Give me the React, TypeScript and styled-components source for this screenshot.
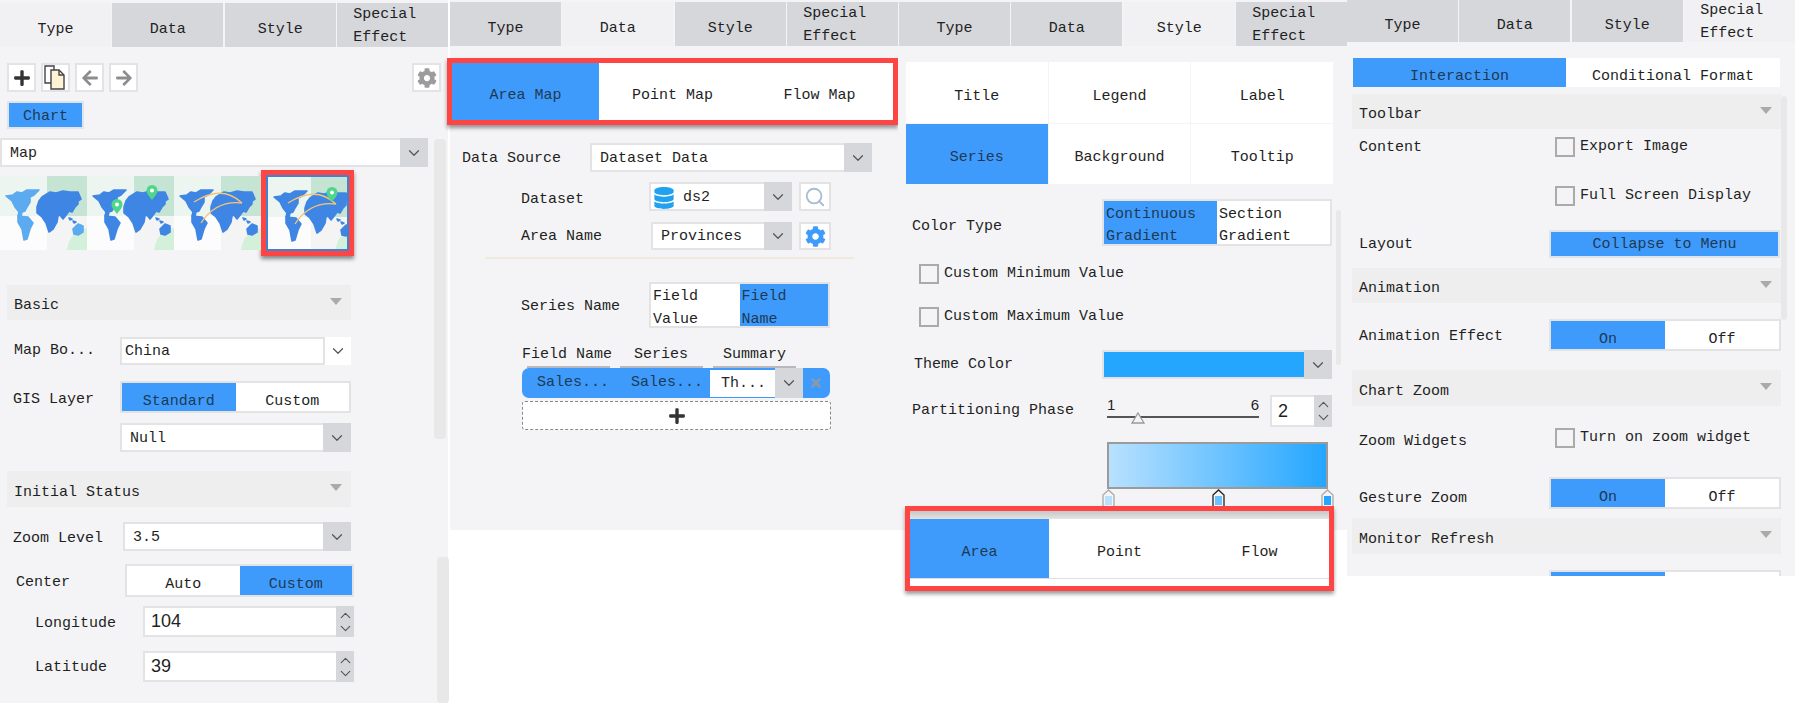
import React from 'react'
import styled, { createGlobalStyle } from 'styled-components'
import { ChevronDown, ChevronUp, Search } from 'lucide-react'
import { FaCog, FaDatabase, FaTimes, FaArrowLeft, FaArrowRight, FaPlus } from 'react-icons/fa'

const BLUE = '#3f9bfb'
const GREY = '#d6d7da'
const LINE = '#e3e3e6'

const Global = createGlobalStyle`
  html, body { margin: 0; padding: 0; background: #fff; overflow: hidden; }
  body { font: 15px/1.2 "Liberation Mono", "DejaVu Sans Mono", monospace; color: #1f1f24; }
  * { box-sizing: border-box; }
`

const Stage = styled.div`
  display: flex;
  width: 1795px;
  height: 703px;
  align-items: flex-start;
  overflow: hidden;
`
const Panel = styled.section<{ $w: number; $h: number; $left?: number; $clip?: boolean }>`
  position: relative;
  flex: none;
  width: ${p => p.$w}px;
  height: ${p => p.$h}px;
  margin-left: ${p => p.$left ?? 0}px;
  background: #f4f4f6;
  overflow: ${p => (p.$clip ? 'hidden' : 'visible')};
`
const TabBar = styled.div<{ $mt: number; $h: number; $pl?: number }>`
  display: flex;
  gap: 1.5px;
  margin-top: ${p => p.$mt}px;
  padding-left: ${p => p.$pl ?? 0}px;
  height: ${p => p.$h}px;
`
const Tab = styled.div<{ $on?: boolean; $wrap?: boolean }>`
  flex: 0 0 calc((100% - 4.5px) / 4);
  min-width: 0;
  display: flex;
  align-items: center;
  justify-content: ${p => (p.$wrap ? 'flex-start' : 'center')};
  padding: ${p => (p.$wrap ? '2px 30px 0 16px' : '8px 0 0')};
  line-height: 23px;
  background: ${p => (p.$on ? '#f1f1f3' : GREY)};
`
const Toolbar = styled.div`
  display: flex;
  gap: 5px;
  margin-top: 16px;
  padding: 0 7px;
`
const IconBtn = styled.div<{ $ml?: string; $w?: number; $h?: number }>`
  display: flex;
  align-items: center;
  justify-content: center;
  flex: none;
  width: ${p => p.$w ?? 29}px;
  height: ${p => p.$h ?? 29}px;
  margin-left: ${p => p.$ml ?? 0};
  background: #fff;
  border: 2px solid ${LINE};
`
const ChartBtn = styled.div`
  display: flex;
  align-items: center;
  justify-content: center;
  width: 77px;
  height: 28px;
  margin: 9px 0 0 7px;
  padding-top: 3px;
  background: ${BLUE};
  border: 2px solid #dfe3ea;
  color: #1d3a55;
`
const Row = styled.div<{ $mt: number; $h: number; $pl?: number }>`
  display: flex;
  align-items: center;
  margin-top: ${p => p.$mt}px;
  padding-left: ${p => p.$pl ?? 0}px;
  height: ${p => p.$h}px;
`
const Label = styled.div<{ $w: number; $dy?: number }>`
  flex: none;
  width: ${p => p.$w}px;
  white-space: pre;
  transform: translateY(${p => p.$dy ?? 0}px);
`
const SelectBox = styled.div<{ $w: number }>`
  flex: none;
  display: flex;
  align-items: stretch;
  width: ${p => p.$w}px;
  height: 100%;
  background: #fff;
  border: 2px solid ${LINE};
`
const SelectText = styled.div<{ $pl?: number }>`
  flex: 1;
  display: flex;
  align-items: center;
  gap: 8px;
  padding-left: ${p => p.$pl ?? 8}px;
  padding-top: 2px;
  min-width: 0;
`
const Arrow = styled.div<{ $plain?: boolean }>`
  flex: none;
  display: flex;
  align-items: center;
  justify-content: center;
  width: 28px;
  margin: -2px -2px -2px 0;
  color: #555;
  background: ${p => (p.$plain ? '#fff' : GREY)};
  border-left: ${p => (p.$plain ? `2px solid ${LINE}` : 'none')};
`
const ColorFill = styled.div`
  flex: 1;
  background: #24a6ff;
`
const Seg = styled.div<{ $w: number }>`
  flex: none;
  display: flex;
  width: ${p => p.$w}px;
  height: 100%;
  background: #fff;
  border: 2px solid ${LINE};
`
const SegItem = styled.div<{ $on?: boolean; $two?: boolean }>`
  flex: 0 0 50%;
  min-width: 0;
  display: flex;
  align-items: center;
  justify-content: ${p => (p.$two ? 'flex-start' : 'center')};
  padding: ${p => (p.$two ? '7px 20px 0 2px' : '10px 0 0')};
  line-height: 22.5px;
  color: ${p => (p.$on ? '#1d3a55' : 'inherit')};
  background: ${p => (p.$on ? BLUE : 'transparent')};
`
const Header = styled.div<{ $mt: number; $h: number; $ml?: number; $w?: number }>`
  display: flex;
  align-items: center;
  justify-content: space-between;
  width: ${p => p.$w ?? 344}px;
  height: ${p => p.$h}px;
  margin: ${p => p.$mt}px 0 0 ${p => p.$ml ?? 7}px;
  padding: 7px 9px 0 7px;
  background: #eeeeee;
  &::after {
    content: '';
    border: 6px solid transparent;
    border-top: 7px solid #aaa;
    border-bottom: 0;
    margin-top: -10px;
  }
`
const Thumbs = styled.div`
  display: flex;
  align-items: center;
  height: 86px;
  margin-top: 3px;
`
const Thumb = styled.div`
  position: relative;
  flex: none;
  width: 87px;
  height: 74px;
  display: grid;
  grid-template-columns: 47px 40px;
  grid-template-rows: 40px 34px;
  overflow: hidden;
`
const Selected = styled.div`
  flex: none;
  width: 93px;
  height: 86px;
  border: 5px solid #ff4444;
  box-shadow: 0 3px 4px rgba(0, 0, 0, 0.45);
  background: #3f82d0;
  padding: 2px;
  ${Thumb} { width: 79px; height: 72px; grid-template-columns: 43px 36px; }
`
const Tile = styled.div<{ $c: string }>`
  background: ${p => p.$c};
`
const Overlay = styled.svg`
  position: absolute;
  left: 0;
  top: 0;
`
const Spin = styled.div`
  flex: none;
  display: flex;
  flex-direction: column;
  align-items: center;
  justify-content: center;
  width: 18px;
  margin: -2px -2px -2px 0;
  background: ${GREY};
  color: #555;
  svg { margin: -2px 0; }
`
const NumText = styled.div`
  flex: 1;
  display: flex;
  align-items: center;
  padding-left: 6px;
  font: 18px "Liberation Sans", Arial, sans-serif;
`
const Scroll = styled.div<{ $top: number; $h: number; $right: number; $w: number }>`
  position: absolute;
  top: ${p => p.$top}px;
  right: ${p => p.$right}px;
  width: ${p => p.$w}px;
  height: ${p => p.$h}px;
  background: #e8e8e9;
  border-radius: 4px;
`
const RedStrip = styled.div`
  position: relative;
  display: flex;
  width: 451px;
  height: 67px;
  margin: 12px 0 0 -3px;
  border: 5px solid #ff4444;
  box-shadow: 0 3px 4px rgba(0, 0, 0, 0.4);
  background: #fff;
`
const StripItem = styled.div<{ $on?: boolean; $w?: number }>`
  flex: none;
  display: flex;
  align-items: center;
  justify-content: center;
  width: ${p => p.$w ?? 147}px;
  height: 100%;
  padding-top: 9px;
  color: ${p => (p.$on ? '#1d3a55' : 'inherit')};
  background: ${p => (p.$on ? BLUE : 'transparent')};
`
const Divider = styled.div`
  width: 369px;
  height: 2px;
  margin: 7px 0 0 35px;
  background: #eeeade;
`
const HeadRow = styled.div`
  display: flex;
  height: 23px;
  margin: 16px 0 0 72px;
`
const HeadCell = styled.div<{ $w: number; $ul: number }>`
  position: relative;
  width: ${p => p.$w}px;
  padding-top: 2px;
  &::after {
    content: '';
    position: absolute;
    left: ${p => p.$ul}px;
    bottom: -1px;
    width: 83px;
    height: 2px;
    background: #b9b9bd;
  }
`
const SeriesRow = styled.div`
  display: flex;
  align-items: center;
  width: 308px;
  height: 30px;
  margin: 1px 0 0 72px;
  background: ${BLUE};
  border-radius: 7px;
  overflow: hidden;
  color: #1d3a55;
`
const SeriesCell = styled.div<{ $w: number; $pl: number }>`
  flex: none;
  width: ${p => p.$w}px;
  padding-left: ${p => p.$pl}px;
`
const MiniSelect = styled.div`
  flex: none;
  display: flex;
  width: 91px;
  height: 27px;
  background: #fff;
  color: #26262b;
`
const CloseCell = styled.div`
  flex: 1;
  display: flex;
  align-items: center;
  justify-content: center;
  color: #8f99a6;
`
const AddRow = styled.div`
  display: flex;
  align-items: center;
  justify-content: center;
  width: 309px;
  height: 29px;
  margin: 3px 0 0 72px;
  background: #fff;
  border: 1px dashed #888;
  border-radius: 3px;
  color: #333;
`
const StyleGrid = styled.div`
  display: grid;
  grid-template-columns: repeat(3, 1fr);
  grid-auto-rows: 60.5px;
  gap: 1px;
  width: 427px;
  margin: 16px 0 0 8px;
`
const GridCell = styled.div<{ $on?: boolean }>`
  display: flex;
  align-items: center;
  justify-content: center;
  padding-top: 9px;
  color: ${p => (p.$on ? '#1d3a55' : 'inherit')};
  background: ${p => (p.$on ? BLUE : '#fff')};
`
const CheckRow = styled(Row)`
  gap: 5px;
`
const Box = styled.span`
  flex: none;
  width: 20px;
  height: 20px;
  border: 2px solid #aaa;
  background: transparent;
`
const Slider = styled.div`
  position: relative;
  flex: none;
  width: 152px;
  height: 32px;
  margin-right: 11px;
  font: 15px "Liberation Sans", Arial, sans-serif;
`
const SliderLine = styled.div`
  position: absolute;
  left: 0;
  right: 0;
  top: 21px;
  height: 2px;
  background: #555;
`
const SliderEnd = styled.span<{ $right?: boolean }>`
  position: absolute;
  top: 1px;
  ${p => (p.$right ? 'right: 0;' : 'left: 0;')}
`
const SliderThumb = styled.svg`
  position: absolute;
  left: 24px;
  top: 17px;
`
const Gradient = styled.div`
  width: 221px;
  height: 47px;
  margin: 15px 0 0 209px;
  background: linear-gradient(90deg, #b8e1ff, #24a6ff);
  border: 2px solid #9b9b9b;
`
const StopRow = styled.div`
  display: flex;
  justify-content: space-between;
  width: 232px;
  height: 17px;
  margin-left: 204px;
`
const StyleStrip = styled.div`
  position: relative;
  width: 429px;
  height: 85px;
  margin-left: 7px;
  border: 5px solid #ff4444;
  box-shadow: 0 3px 4px rgba(0, 0, 0, 0.4);
  background: #fff;
`
const StripShade = styled.div`
  height: 8px;
  background: linear-gradient(#c6c6c8, #e4e4e4);
`
const StripItems = styled.div`
  display: flex;
  height: 60px;
  border-bottom: 1px solid #ddd;
`
const SubTabs = styled.div`
  display: flex;
  width: 427px;
  height: 29px;
  margin: 16px 0 0 6px;
  background: #fff;
`
const WideBtn = styled.div`
  flex: none;
  display: flex;
  align-items: center;
  justify-content: center;
  width: 231px;
  height: 100%;
  padding-top: 2px;
  background: ${BLUE};
  border: 2px solid #dfe3ea;
  color: #1d3a55;
`

const Chev = () => <ChevronDown size={18} strokeWidth={1.6} />

const Select = ({ w, text, plain, pl, icon }: { w: number; text: string; plain?: boolean; pl?: number; icon?: React.ReactNode }) => (
  <SelectBox $w={w}>
    <SelectText $pl={pl}>{icon}{text}</SelectText>
    <Arrow $plain={plain}><Chev /></Arrow>
  </SelectBox>
)

const OnOff = ({ w, a, b, first }: { w: number; a?: string; b?: string; first: boolean }) => (
  <Seg $w={w}>
    <SegItem $on={first}>{a}</SegItem>
    <SegItem $on={!first}>{b}</SegItem>
  </Seg>
)

const Num = ({ w, value }: { w: number; value: string }) => (
  <SelectBox $w={w}>
    <NumText>{value}</NumText>
    <Spin>
      <ChevronUp size={17} strokeWidth={1.6} />
      <ChevronDown size={17} strokeWidth={1.6} />
    </Spin>
  </SelectBox>
)

// 지도 썸네일: pin / flow 표시만 다름
const WorldMap = ({ soft, pins, flow }: { soft?: boolean; pins?: [number, number][]; flow?: boolean }) => {
  const land = '#3f86e4'
  const side = soft ? '#5cabf0' : land
  return (
    <Overlay width="87" height="74" viewBox="0 0 87 74">
      <g strokeLinejoin="round" strokeWidth="1.6">
        <path fill={side} stroke={side} d="M6 20L13 19L17 16L22 17L27 14L39 14L34 19L30 21L30 26L27 31L25 35L22 36L21 40L18 40L19 36L15 31L12 25Z" />
        <path fill={side} stroke={side} d="M18 40L28 41L33 47L30 53L27 63L24 64L22 53L18 46Z" />
        <path fill={land} stroke={land} d="M37 31L39 25L42 21L50 16L56 17L63 15L70 16L78 16L81 23L78 25L78 28L75 31L72 36L69 35L67 38L63 43L60 39L58 40L57 46L53 53L49 56L46 47L42 41L37 37Z" />
        <path fill={side} stroke={side} d="M73 53L78 48L83 50L83 56L78 59L74 58Z" />
        <path fill={land} stroke={land} d="M69 42L72 43L70 44ZM73 45L76 46L74 47Z" />
      </g>
      {flow && (
        <g fill="none" stroke="#f6c476" strokeWidth="1.300">
          <path d="M20 26Q48 8 68 27" />
          <path d="M27 47Q42 24 68 27" />
        </g>
      )}
      {pins?.map(([x, y]) => (
        <g key={x}>
          <path fill="#4fd68a" d={`M${x} ${y}c-3-4-5.500-6.500-5.500-9.500a5.500 5.500 0 0 1 11 0c0 3-2.500 5.500-5.500 9.500z`} />
          <circle cx={x} cy={y - 9.5} r="2" fill="#fff" />
        </g>
      ))}
    </Overlay>
  )
}

const MapThumb = ({ children }: { children: React.ReactNode }) => (
  <Thumb>
    <Tile $c="#edf5f1" /><Tile $c="#c6e4d3" />
    <Tile $c="#fcfcfc" /><Tile $c="#f4f4f4" />
    <Overlay width="87" height="74">
      <path d="M67 74Q70 55 87 52V74Z" fill="#d3f0da" />
    </Overlay>
    {children}
  </Thumb>
)

const CopyIcon = () => (
  <svg width="25" height="27" viewBox="0 0 25 27" fill="none" stroke="#444" strokeWidth="1.4">
    <path d="M2 2h9v17H2z" fill="#fff" />
    <path d="M8 6h8l5 5v14H8z" fill="#fff3d6" />
    <path d="M16 6v5h5" />
  </svg>
)

const Stop = ({ c, dark }: { c: string; dark?: boolean }) => (
  <svg width="13" height="17" viewBox="0 0 13 17">
    <path d="M1 17V6L6.500 1L12 6V17" fill="none" stroke={dark ? '#222' : '#aaa'} strokeWidth="1.300" />
    <rect x="3" y="7" width="7" height="9" fill={c} />
  </svg>
)

const Tabs = ({ active, mt, h, pl }: { active: number; mt: number; h: number; pl?: number }) => (
  <TabBar $mt={mt} $h={h} $pl={pl}>
    <Tab $on={active === 0}>Type</Tab>
    <Tab $on={active === 1}>Data</Tab>
    <Tab $on={active === 2}>Style</Tab>
    <Tab $on={active === 3} $wrap>Special Effect</Tab>
  </TabBar>
)

const TypePanel = () => (
  <Panel $w={448} $h={703}>
    <Tabs active={0} mt={3} h={44} />
    <Toolbar>
      <IconBtn><FaPlus size={18} color="#333" /></IconBtn>
      <IconBtn><CopyIcon /></IconBtn>
      <IconBtn><FaArrowLeft size={18} color="#8d8d8d" /></IconBtn>
      <IconBtn><FaArrowRight size={18} color="#8d8d8d" /></IconBtn>
      <IconBtn $ml="auto"><FaCog size={20} color="#9c9c9c" /></IconBtn>
    </Toolbar>
    <ChartBtn>Chart</ChartBtn>
    <Row $mt={9} $h={29}><Select w={428} text="Map" /></Row>
    <Thumbs>
      <MapThumb><WorldMap soft /></MapThumb>
      <MapThumb><WorldMap pins={[[30, 38], [65, 24]]} /></MapThumb>
      <MapThumb><WorldMap flow /></MapThumb>
      <Selected>
        <MapThumb><WorldMap flow pins={[[64, 25]]} /></MapThumb>
      </Selected>
    </Thumbs>
    <Header $mt={29} $h={35}>Basic</Header>
    <Row $mt={17} $h={28} $pl={14}>
      <Label $w={106}>Map Bo...</Label>
      <Select w={231} text="China" plain pl={3} />
    </Row>
    <Row $mt={16} $h={32} $pl={13}>
      <Label $w={107} $dy={3}>GIS Layer</Label>
      <OnOff w={231} a="Standard" b="Custom" first />
    </Row>
    <Row $mt={10} $h={29} $pl={120}><Select w={231} text="Null" /></Row>
    <Header $mt={19} $h={36}>Initial Status</Header>
    <Row $mt={15} $h={29} $pl={13}>
      <Label $w={110} $dy={2}>Zoom Level</Label>
      <Select w={228} text="3.5" />
    </Row>
    <Row $mt={13} $h={33} $pl={16}>
      <Label $w={109} $dy={2}>Center</Label>
      <OnOff w={229} a="Auto" b="Custom" first={false} />
    </Row>
    <Row $mt={9} $h={31} $pl={35}>
      <Label $w={108} $dy={2}>Longitude</Label>
      <Num w={211} value="104" />
    </Row>
    <Row $mt={14} $h={31} $pl={35}>
      <Label $w={108} $dy={1}>Latitude</Label>
      <Num w={211} value="39" />
    </Row>
    <Scroll $top={139} $h={300} $right={2} $w={12} />
    <Scroll $top={557} $h={146} $right={-1} $w={12} />
  </Panel>
)

const DataPanel = () => (
  <Panel $w={448} $h={530} $left={2}>
    <Tabs active={1} mt={2} h={44} />
    <RedStrip>
      <StripItem $on>Area Map</StripItem>
      <StripItem>Point Map</StripItem>
      <StripItem>Flow Map</StripItem>
    </RedStrip>
    <Row $mt={18} $h={29} $pl={12}>
      <Label $w={128} $dy={1}>Data Source</Label>
      <Select w={282} text="Dataset Data" />
    </Row>
    <Row $mt={10} $h={29} $pl={71}>
      <Label $w={128} $dy={3}>Dataset</Label>
      <Select w={143} text="ds2" pl={2} icon={<FaDatabase size={22} color="#22a2ee" />} />
      <IconBtn $ml="7px" $w={32}><Search size={22} color="#a9bcd0" strokeWidth={2} /></IconBtn>
    </Row>
    <Row $mt={11} $h={28} $pl={71}>
      <Label $w={130} $dy={1}>Area Name</Label>
      <Select w={141} text="Provinces" />
      <IconBtn $ml="7px" $w={32} $h={28}><FaCog size={21} color={BLUE} /></IconBtn>
    </Row>
    <Divider />
    <Row $mt={23} $h={46} $pl={71}>
      <Label $w={128} $dy={2}>Series Name</Label>
      <Seg $w={181}>
        <SegItem $two>Field Value</SegItem>
        <SegItem $two $on>Field Name</SegItem>
      </Seg>
    </Row>
    <HeadRow>
      <HeadCell $w={112} $ul={5}>Field Name</HeadCell>
      <HeadCell $w={89} $ul={-14}>Series</HeadCell>
      <HeadCell $w={90} $ul={-10}>Summary</HeadCell>
    </HeadRow>
    <SeriesRow>
      <SeriesCell $w={109} $pl={15}>Sales...</SeriesCell>
      <SeriesCell $w={79} $pl={0}>Sales...</SeriesCell>
      <MiniSelect>
        <SelectText $pl={11}>Th...</SelectText>
        <Arrow><Chev /></Arrow>
      </MiniSelect>
      <CloseCell><FaTimes size={14} /></CloseCell>
    </SeriesRow>
    <AddRow><FaPlus size={18} /></AddRow>
  </Panel>
)

const StylePanel = () => (
  <Panel $w={449} $h={530}>
    <Tabs active={2} mt={2} h={44} pl={1} />
    <StyleGrid>
      <GridCell>Title</GridCell>
      <GridCell>Legend</GridCell>
      <GridCell>Label</GridCell>
      <GridCell $on>Series</GridCell>
      <GridCell>Background</GridCell>
      <GridCell>Tooltip</GridCell>
    </StyleGrid>
    <Row $mt={15} $h={47} $pl={14}>
      <Label $w={190} $dy={4}>Color Type</Label>
      <Seg $w={230}>
        <SegItem $two $on>Continuous Gradient</SegItem>
        <SegItem $two>Section Gradient</SegItem>
      </Seg>
    </Row>
    <CheckRow $mt={18} $h={19} $pl={21}><Box />Custom Minimum Value</CheckRow>
    <CheckRow $mt={24} $h={19} $pl={21}><Box />Custom Maximum Value</CheckRow>
    <Row $mt={24} $h={29} $pl={16}>
      <Label $w={188}>Theme Color</Label>
      <SelectBox $w={230}>
        <ColorFill />
        <Arrow><Chev /></Arrow>
      </SelectBox>
    </Row>
    <Row $mt={16} $h={32} $pl={14}>
      <Label $w={195}>Partitioning Phase</Label>
      <Slider>
        <SliderEnd>1</SliderEnd>
        <SliderEnd $right>6</SliderEnd>
        <SliderLine />
        <SliderThumb width="14" height="12" viewBox="0 0 14 12">
          <path d="M7 1L13 11H1Z" fill="#f4f4f6" stroke="#999" strokeWidth="1.300" />
        </SliderThumb>
      </Slider>
      <Num w={62} value="2" />
    </Row>
    <Gradient />
    <StopRow>
      <Stop c="#b8e1ff" />
      <Stop c="#6cc2ff" dark />
      <Stop c="#24a6ff" />
    </StopRow>
    <StyleStrip>
      <StripShade />
      <StripItems>
        <StripItem $on $w={139}>Area</StripItem>
        <StripItem $w={141}>Point</StripItem>
        <StripItem $w={139}>Flow</StripItem>
      </StripItems>
    </StyleStrip>
    <Scroll $top={210} $h={155} $right={6} $w={5} />
  </Panel>
)

const EffectPanel = () => (
  <Panel $w={448} $h={576} $clip>
    <Tabs active={3} mt={0} h={42} />
    <SubTabs>
      <StripItem $on $w={213}>Interaction</StripItem>
      <StripItem $w={214}>Conditional Format</StripItem>
    </SubTabs>
    <Header $mt={7} $h={35} $ml={5} $w={429}>Toolbar</Header>
    <CheckRow $mt={8} $h={19} $pl={12}>
      <Label $w={191} $dy={1}>Content</Label>
      <Box />Export Image
    </CheckRow>
    <CheckRow $mt={30} $h={20} $pl={208}><Box />Full Screen Display</CheckRow>
    <Row $mt={24} $h={28} $pl={12}>
      <Label $w={190} $dy={1}>Layout</Label>
      <WideBtn>Collapse to Menu</WideBtn>
    </Row>
    <Header $mt={10} $h={35} $ml={5} $w={429}>Animation</Header>
    <Row $mt={16} $h={32} $pl={12}>
      <Label $w={190} $dy={2}>Animation Effect</Label>
      <OnOff w={232} a="On" b="Off" first />
    </Row>
    <Header $mt={19} $h={36} $ml={5} $w={429}>Chart Zoom</Header>
    <CheckRow $mt={22} $h={20} $pl={12}>
      <Label $w={191} $dy={4}>Zoom Widgets</Label>
      <Box />Turn on zoom widget
    </CheckRow>
    <Row $mt={29} $h={32} $pl={12}>
      <Label $w={190} $dy={6}>Gesture Zoom</Label>
      <OnOff w={232} a="On" b="Off" first />
    </Row>
    <Header $mt={9} $h={36} $ml={5} $w={429}>Monitor Refresh</Header>
    <Row $mt={16} $h={32} $pl={202}>
      <OnOff w={232} first />
    </Row>
    <Scroll $top={96} $h={224} $right={8} $w={6} />
  </Panel>
)

const App = () => (
  <Stage>
    <Global />
    <TypePanel />
    <DataPanel />
    <StylePanel />
    <EffectPanel />
  </Stage>
)

export default App
